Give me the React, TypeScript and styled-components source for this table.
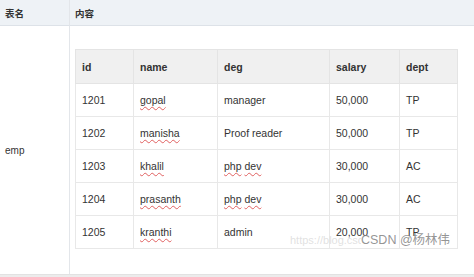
import React from "react";
import styled, { createGlobalStyle } from "styled-components";

const Global = createGlobalStyle`
  html, body { margin: 0; padding: 0; background: #ececec; }
  body { font-family: "Liberation Sans", Arial, "Noto Sans CJK SC", sans-serif; color: #333; }
`;

const Outer = styled.div`
  width: 474px;
  height: 274px;
  background: #fff;
  display: grid;
  grid-template-columns: 70px 1fr;
  grid-template-rows: 26px 1fr;
  border-bottom: 1px solid #e2e2e2;
  position: relative;
  overflow: hidden;
`;

const HeadCell = styled.div<{ $first?: boolean }>`
  background: #eef2f6;
  border-bottom: 1px solid #dde2e8;
  border-right: ${(p) => (p.$first ? "1px solid #e3e6ea" : "none")};
  display: flex;
  align-items: center;
  padding-left: 5px;
  font-size: 9.5px;
  font-weight: bold;
  color: #333;
  font-family: "Noto Sans CJK SC", "Liberation Sans", sans-serif;
`;

const NameCell = styled.div`
  border-right: 1px solid #e3e6ea;
  display: flex;
  align-items: center;
  padding-left: 5px;
  font-size: 10px;
  color: #333;
`;

const ContentCell = styled.div`
  padding: 23px 0 0 5px;
`;

const Table = styled.table`
  border-collapse: collapse;
  width: 382px;
  table-layout: fixed;
  font-size: 10.5px;
  color: #333;
`;

const Th = styled.th<{ $w: number }>`
  box-sizing: border-box;
  width: ${(p) => p.$w}px;
  height: 34px;
  background: #f0f0f0;
  border: 1px solid #e4e4e4;
  text-align: left;
  padding: 0 0 0 6px;
  font-weight: bold;
  font-size: 10.5px;
`;

const Td = styled.td`
  box-sizing: border-box;
  height: 33px;
  border: 1px solid #e8e8e8;
  padding: 0 0 0 6px;
  font-weight: normal;
  white-space: nowrap;
`;

const Spell = styled.span`
  text-decoration: underline wavy #e06060;
  text-decoration-thickness: 1px;
  text-underline-offset: 2px;
`;

const Watermark = styled.div`
  position: absolute;
  left: 290px;
  top: 229px;
  display: flex;
  align-items: baseline;
  white-space: nowrap;
  pointer-events: none;
`;

const Faint = styled.span`
  font-size: 11px;
  color: rgba(200, 200, 200, 0.55);
  width: 71px;
  overflow: hidden;
`;

const Brand = styled.span`
  font-size: 12.5px;
  color: rgba(130, 130, 130, 0.85);
  font-family: "Liberation Sans", "Noto Sans CJK SC", sans-serif;
`;

const cols = [
  { k: "id", w: 58 },
  { k: "name", w: 84 },
  { k: "deg", w: 112 },
  { k: "salary", w: 70 },
  { k: "dept", w: 58 },
];

const rows: [string, string, React.ReactNode, string, string][] = [
  ["1201", "gopal", "manager", "50,000", "TP"],
  ["1202", "manisha", "Proof reader", "50,000", "TP"],
  ["1203", "khalil", <><Spell>php</Spell> <Spell>dev</Spell></>, "30,000", "AC"],
  ["1204", "prasanth", <><Spell>php</Spell> <Spell>dev</Spell></>, "30,000", "AC"],
  ["1205", "kranthi", "admin", "20,000", "TP"],
];

export default function App() {
  return (
    <>
      <Global />
      <Outer>
        <HeadCell $first>表名</HeadCell>
        <HeadCell>内容</HeadCell>
        <NameCell>emp</NameCell>
        <ContentCell>
          <Table>
            <thead>
              <tr>
                {cols.map((c) => (
                  <Th key={c.k} $w={c.w}>{c.k}</Th>
                ))}
              </tr>
            </thead>
            <tbody>
              {rows.map((r) => (
                <tr key={r[0]}>
                  <Td>{r[0]}</Td>
                  <Td><Spell>{r[1]}</Spell></Td>
                  <Td>{r[2]}</Td>
                  <Td>{r[3]}</Td>
                  <Td>{r[4]}</Td>
                </tr>
              ))}
            </tbody>
          </Table>
        </ContentCell>
        <Watermark>
          <Faint>https://blog.csdn.net</Faint>
          <Brand>CSDN @杨林伟</Brand>
        </Watermark>
      </Outer>
    </>
  );
}
